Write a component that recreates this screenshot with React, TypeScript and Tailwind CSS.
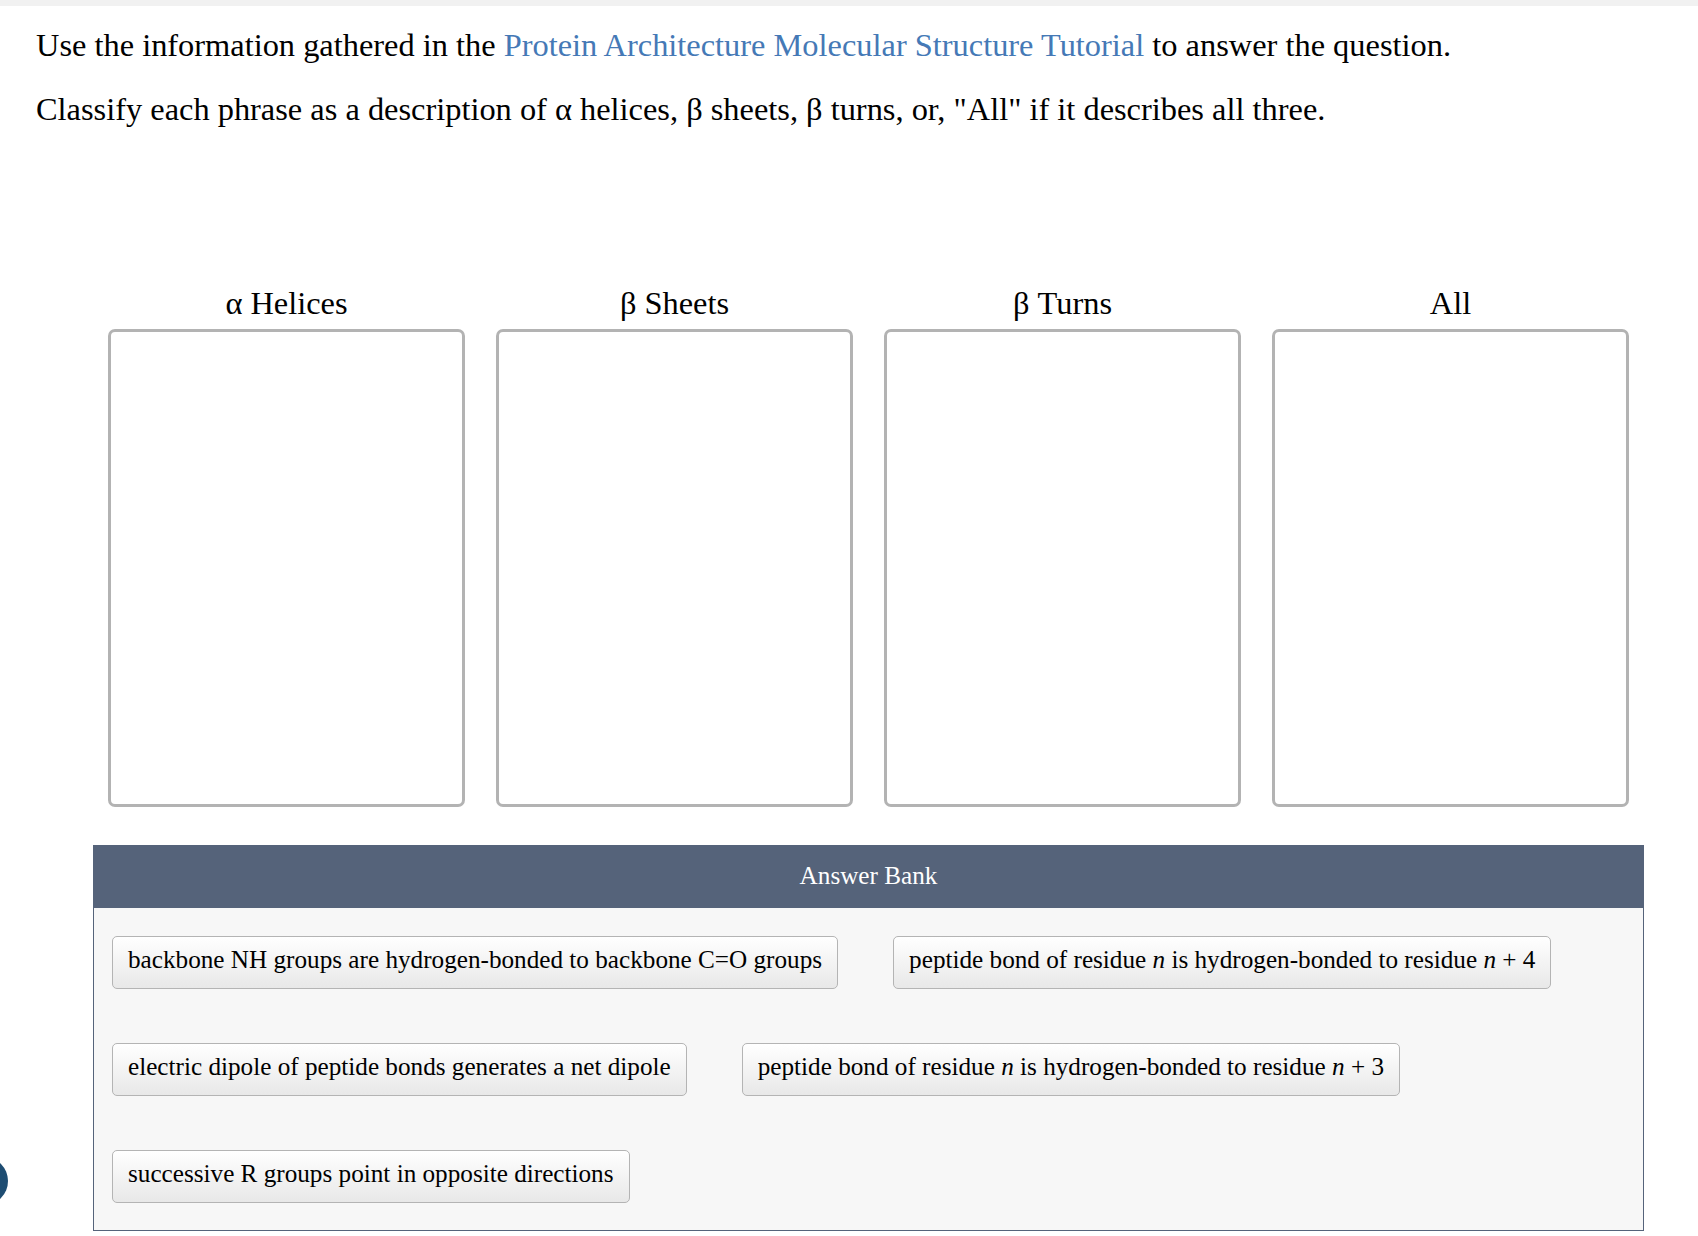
import React from "react";

const serif = { fontFamily: '"Liberation Serif", "Times New Roman", serif' };

function Chip({ children }: { children: React.ReactNode }) {
  return (
    <div className="h-[53px] flex items-center pl-[15px] pr-[15px] border border-[#b4b4b4] rounded-[5px] bg-gradient-to-b from-[#ffffff] to-[#e8e8e8] text-[25.2px] leading-[29px] text-black whitespace-nowrap pb-[6px]">
      {children}
    </div>
  );
}

export default function App() {
  const cols = ["α Helices", "β Sheets", "β Turns", "All"];
  return (
    <div
      className="relative w-full h-[1236px] overflow-hidden bg-white text-black"
      style={serif}
    >
      <div className="h-[6px] bg-[#f1f1f1]" />
      <div className="pl-[36px]">
        <p className="mt-[21px] text-[32.4px] leading-[36px]">
          Use the information gathered in the{" "}
          <span className="text-[#4579b6]">
            Protein Architecture Molecular Structure Tutorial
          </span>{" "}
          to answer the question.
        </p>
        <p className="mt-[28px] text-[32.4px] leading-[36px]">
          Classify each phrase as a description of α helices, β sheets, β turns,
          or, "All" if it describes all three.
        </p>
      </div>

      <div className="ml-[93px] w-[1551px] mt-[158px] flex justify-center gap-[31px]">
        {cols.map((c) => (
          <div key={c} className="w-[357px] flex flex-col items-center">
            <div className="text-[32.4px] leading-[36px] mb-[8px]">{c}</div>
            <div className="w-[357px] h-[478px] border-[3px] border-[#b3b3b3] rounded-[7px] bg-white" />
          </div>
        ))}
      </div>

      <div className="ml-[93px] w-[1551px] mt-[38px]">
        <div className="h-[63px] bg-[#55637a] flex items-center justify-center text-white text-[25.2px] leading-[29px] pb-[2px]">
          Answer Bank
        </div>
        <div className="bg-[#f7f7f7] border-l border-r border-b border-[#55637a] pl-[18px] pr-[18px] pt-[28px] pb-[27px] flex flex-wrap gap-x-[55px] gap-y-[54px]">
          <Chip>backbone NH groups are hydrogen-bonded to backbone C=O groups</Chip>
          <Chip>
            peptide bond of residue&nbsp;<i>n</i>&nbsp;is hydrogen-bonded to residue&nbsp;<i>n</i>&nbsp;+&nbsp;4
          </Chip>
          <Chip>electric dipole of peptide bonds generates a net dipole</Chip>
          <Chip>
            peptide bond of residue&nbsp;<i>n</i>&nbsp;is hydrogen-bonded to residue&nbsp;<i>n</i>&nbsp;+&nbsp;3
          </Chip>
          <Chip>successive R groups point in opposite directions</Chip>
        </div>
      </div>

      <div className="absolute left-[-40px] top-[1157px] w-[48px] h-[48px] rounded-full bg-[#1e4d72]" />
      <div
        className="absolute left-[1353px] top-[1233px] text-[17px] leading-[20px] text-[#333] whitespace-nowrap"
        style={{ fontFamily: '"Liberation Sans", Arial, sans-serif' }}
      >
        Question Source: Nelson/Cox · Lehninger Principles of Biochemistry
      </div>
    </div>
  );
}
